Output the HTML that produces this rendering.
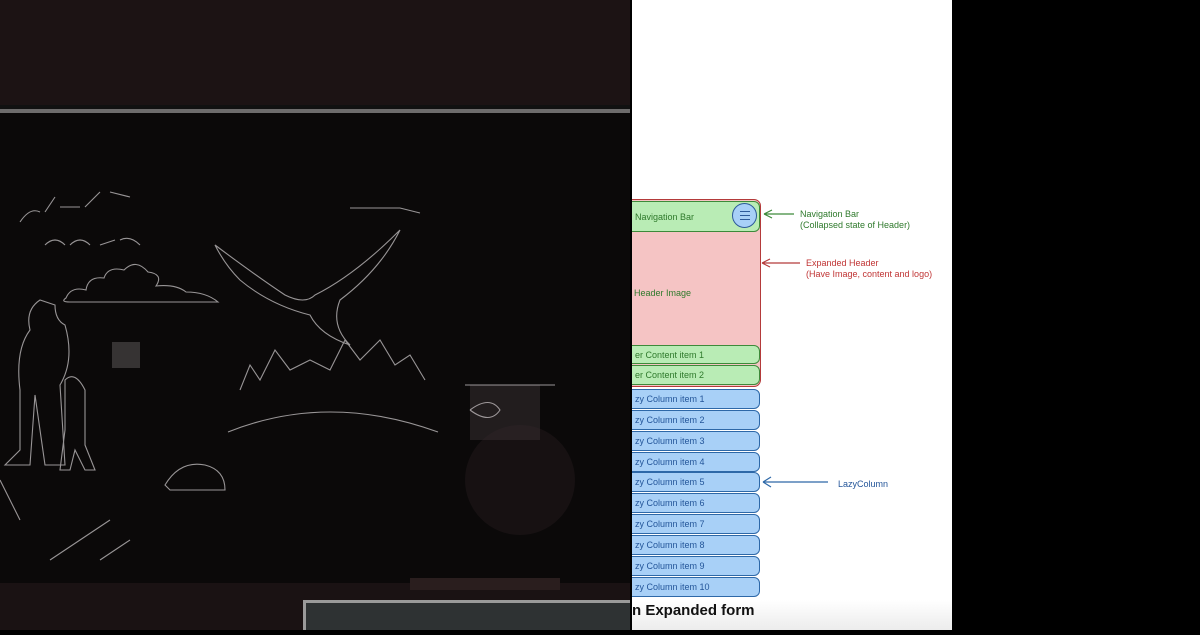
<!DOCTYPE html>
<html><head><meta charset="utf-8"><style>
html,body{margin:0;padding:0;width:1200px;height:630px;overflow:hidden;background:#000;font-family:"Liberation Sans",sans-serif}
.left{position:absolute;left:0;top:0;width:630px;height:630px;background:#1a1213}
.panel{position:absolute;left:632px;top:0;width:320px;height:630px;background:#fff;overflow:hidden}
.box{position:absolute;left:-10px;width:138px;border:1.5px solid;border-radius:6px;font-size:9px;box-sizing:border-box;padding-left:12px;display:flex;align-items:center;font-family:"Liberation Sans",sans-serif}
.g{background:#b9ecb5;border-color:#3d8a3a;color:#2f7a2c}
.b{background:#a8d0f7;border-color:#2d68a8;color:#24569a}
.lbl{position:absolute;font-size:9px;line-height:11px}
</style></head><body>
<div class="left">
<svg width="630" height="630" viewBox="0 0 630 630">
<rect x="0" y="0" width="630" height="105" fill="#1c1314"/>
<rect x="0" y="105" width="630" height="4" fill="#111"/>
<rect x="0" y="109" width="630" height="4" fill="#6e6c6c"/>
<rect x="0" y="113" width="630" height="470" fill="#0b0909"/>
<rect x="0" y="583" width="630" height="47" fill="#1a1213"/>
<rect x="410" y="578" width="150" height="12" fill="#2a1e1e"/>
<rect x="303" y="600" width="327" height="30" fill="#9a9a9a"/>
<rect x="306" y="603" width="324" height="27" fill="#2e3233"/>
<g fill="none" stroke="#c8c4c6" stroke-width="1.1" opacity="0.75">
<path d="M66 298 q5-12 20-8 q2-14 18-12 q4-12 20-8 q12-12 24 2 q16 2 8 14 q20-2 30 6 q20 0 32 10 H70 q-10 0-4-4z"/>
<path d="M215 245 q40 30 70 50 q20 10 30 0 q40-20 85-65 q-20 40-60 70 q-10 25 10 45 q-30-10-40-30 q-40-10-70-35 q-15-15-25-35z"/>
<path d="M228 432 q100-40 210 0"/>
<path d="M240 390 l10-25 l10 15 l15-30 l15 20 l20-10 l20 10 l15-30 l15 20 l20-20 l15 25 l15-10 l15 25"/>
<path d="M40 300 q-15 10-10 30 q-15 20-10 60 v60 l-15 15 h25 l5-70 l10 70 h20 l-5-80 q15-25 5-60 q-10-5-10-20 z"/>
<path d="M65 380 q10-10 20 10 v55 l10 25 h-10 l-10-20 l-5 20 h-10 l5-40 z"/>
<path d="M165 485 q15-25 40-20 q20 5 20 25 h-55 z"/>
<path d="M20 222 q10-15 20-10 m5 0 l10-15 m5 10 h20 m5 0 l15-15 m10 0 l20 5 M45 245 q10-10 20 0 m5 0 q10-10 20 0 m10 0 l15-5 m5 0 q10-5 20 5"/>
<path d="M350 208 h50 l20 5 M0 480 l20 40 M50 560 l60-40 M100 560 l30-20"/>
<path d="M465 385 h90 M470 410 q20-15 30 0 q-10 15 -30 0"/>
</g>
<rect x="112" y="342" width="28" height="26" fill="#e6dcdc" opacity="0.2"/>
<rect x="470" y="385" width="70" height="55" fill="#d0b8bf" opacity="0.12"/>
<ellipse cx="520" cy="480" rx="55" ry="55" fill="#3a2a2e" opacity="0.25"/>
</svg>
</div>
<div class="panel">
<div style="position:absolute;left:-10px;top:199px;width:139px;height:188px;border:1.5px solid #b43a3a;border-radius:7px;background:#f5c4c4;box-sizing:border-box"></div>
<div class="box g" style="top:201px;height:31px">Navigation Bar</div>
<div style="position:absolute;left:100px;top:203px;width:25px;height:25px;border:1.5px solid #2d5a9a;border-radius:50%;background:#a8d0f7;box-sizing:border-box;display:flex;flex-direction:column;justify-content:center;align-items:center;gap:3px">
<div style="width:10px;height:1px;background:#2d5a9a"></div><div style="width:10px;height:1px;background:#2d5a9a"></div><div style="width:10px;height:1px;background:#2d5a9a"></div></div>
<div class="lbl" style="left:2px;top:288px;color:#2f7a2c">Header Image</div>
<div class="box g" style="top:345px;height:19px">er Content item 1</div>
<div class="box g" style="top:365px;height:20px">er Content item 2</div>
<div class="box b" style="top:389px;height:20px">zy Column item 1</div>
<div class="box b" style="top:410px;height:20px">zy Column item 2</div>
<div class="box b" style="top:431px;height:20px">zy Column item 3</div>
<div class="box b" style="top:452px;height:20px">zy Column item 4</div>
<div class="box b" style="top:472px;height:20px">zy Column item 5</div>
<div class="box b" style="top:493px;height:20px">zy Column item 6</div>
<div class="box b" style="top:514px;height:20px">zy Column item 7</div>
<div class="box b" style="top:535px;height:20px">zy Column item 8</div>
<div class="box b" style="top:556px;height:20px">zy Column item 9</div>
<div class="box b" style="top:577px;height:20px">zy Column item 10</div>
<svg style="position:absolute;left:0;top:0" width="320" height="630">
<g fill="none" stroke-width="1.2">
<path d="M132 214 H162 M132 214 l8-4 M132 214 l8 4" stroke="#3d8a3a"/>
<path d="M130 263 H168 M130 263 l8-4 M130 263 l8 4" stroke="#b43a3a"/>
<path d="M131 482 H196 M131 482 l8-5 M131 482 l8 5" stroke="#2d68a8"/>
</g></svg>
<div class="lbl" style="left:168px;top:209px;color:#2f7a2c">Navigation Bar<br>(Collapsed state of Header)</div>
<div class="lbl" style="left:174px;top:258px;color:#c03434">Expanded Header<br>(Have Image, content and logo)</div>
<div class="lbl" style="left:206px;top:479px;color:#24569a">LazyColumn</div>
<div style="position:absolute;left:-2px;top:600px;width:322px;height:30px;background:linear-gradient(#fff,#ececec)"></div>
<div style="position:absolute;left:0;top:602px;font-size:15px;font-weight:bold;color:#111">n Expanded form</div>
</div>
</body></html>
